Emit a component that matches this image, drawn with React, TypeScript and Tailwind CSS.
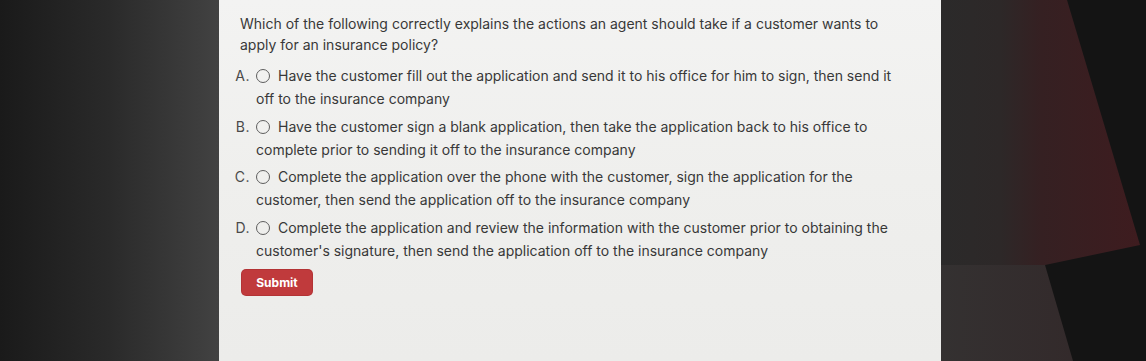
import React from "react";

const options = [
  {
    key: "A.",
    text: "Have the customer fill out the application and send it to his office for him to sign, then send it off to the insurance company",
  },
  {
    key: "B.",
    text: "Have the customer sign a blank application, then take the application back to his office to complete prior to sending it off to the insurance company",
  },
  {
    key: "C.",
    text: "Complete the application over the phone with the customer, sign the application for the customer, then send the application off to the insurance company",
  },
  {
    key: "D.",
    text: "Complete the application and review the information with the customer prior to obtaining the customer's signature, then send the application off to the insurance company",
  },
];

function Backdrop() {
  return (
    <svg className="absolute inset-0 h-full w-full" viewBox="0 0 205 361" preserveAspectRatio="none">
      <defs>
        <linearGradient id="glow" x1="0" x2="1" y1="0" y2="0">
          <stop offset="0" stopColor="#2b2a2a" />
          <stop offset="0.3" stopColor="#2d2828" />
          <stop offset="0.5" stopColor="#352022" />
          <stop offset="1" stopColor="#3e1c1f" />
        </linearGradient>
        <linearGradient id="low" x1="0" x2="1" y1="0" y2="0">
          <stop offset="0" stopColor="#343131" />
          <stop offset="1" stopColor="#332a2b" />
        </linearGradient>
      </defs>
      <rect width="205" height="361" fill="#141414" />
      <polygon points="0,0 126,0 199,245 104,265 0,265" fill="url(#glow)" />
      <polygon points="0,265 104,265 132,361 0,361" fill="url(#low)" />
    </svg>
  );
}

export default function App() {
  return (
    <div className="flex h-[361px] w-[1146px] overflow-hidden bg-[#1c1c1c] font-['Inter',sans-serif]">
      {/* left screen bezel */}
      <div className="w-[219px] shrink-0 bg-gradient-to-r from-[#1a1a1a] via-[#2a2a2a] to-[#424242]" />

      {/* question card */}
      <div className="w-[722px] shrink-0 bg-gradient-to-b from-[#f3f3f2] via-[#efefed] to-[#ececea] pl-[21px] pt-[13px] text-[14px] leading-[21px] text-[#383838]">
        <p className="w-[655px]">
          Which of the following correctly explains the actions an agent should take if a customer wants to apply
          for an insurance policy?
        </p>

        <div className="mt-[9px] flex flex-col gap-[4.5px]">
          {options.map((o) => (
            <div key={o.key} className="flex leading-[23px]">
              <span className="-ml-[8px] w-[24px] shrink-0 pr-[6px] text-right tracking-[0.5px] text-[#4a4a4a]">
                {o.key}
              </span>
              <p className="w-[642px]">
                <span className="mr-[8px] inline-block h-[14px] w-[14px] rounded-full border-[1.3px] border-[#5e5e5e] align-[-2px]" />
                {o.text}
              </p>
            </div>
          ))}
        </div>

        <button className="ml-[2px] mt-[8px] h-[25px] w-[70px] rounded-[4px] bg-[#c03a3c] text-[12px] font-bold text-white shadow-[0_0_0_1px_#b33335]">
          Submit
        </button>
      </div>

      {/* right screen bezel */}
      <div className="relative flex-1">
        <Backdrop />
      </div>
    </div>
  );
}
